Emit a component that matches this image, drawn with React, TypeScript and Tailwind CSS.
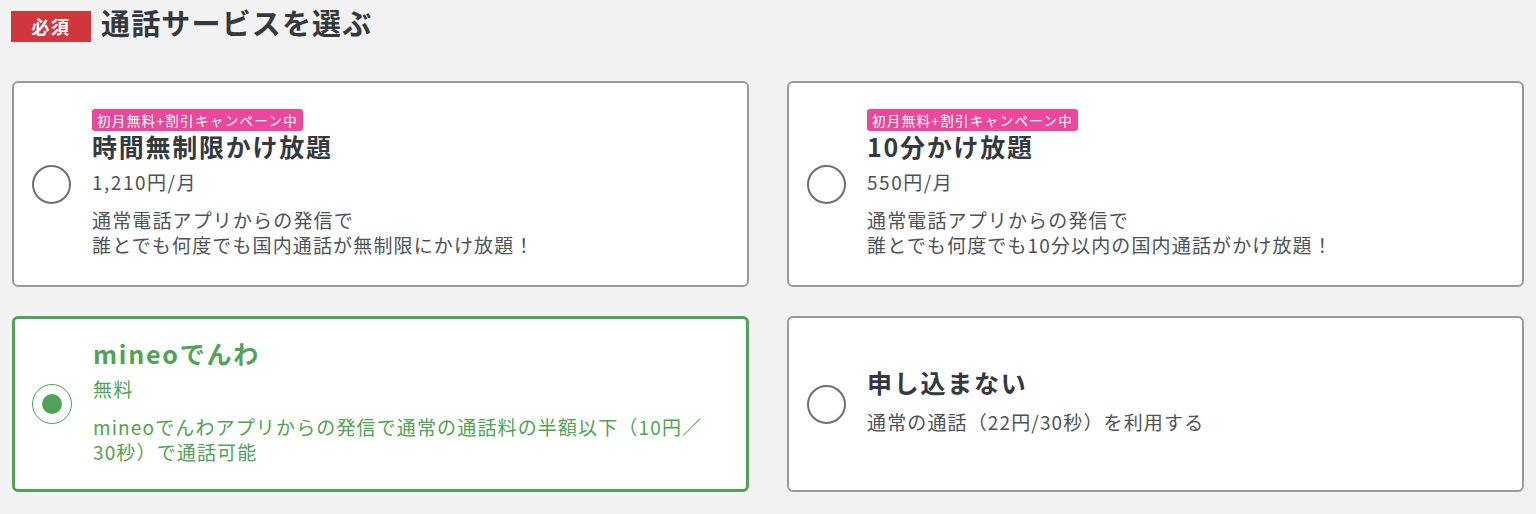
import React from "react";

const FONT = '"Noto Sans CJK JP", "Noto Sans", sans-serif';

type Opt = {
  promo?: boolean;
  title: string;
  price?: string;
  desc: React.ReactNode;
  selected?: boolean;
};

function Radio({ selected }: { selected?: boolean }) {
  if (selected) {
    return (
      <div className="flex h-[40px] w-[40px] shrink-0 items-center justify-center rounded-full border-[1.5px] border-[#4ea354] bg-white">
        <div className="h-[20px] w-[20px] rounded-full bg-[#4ea354]" />
      </div>
    );
  }
  return <div className="h-[39px] w-[39px] shrink-0 rounded-full border-2 border-[#6f6f6f] bg-white" />;
}

function Card({ opt, minH, lift }: { opt: Opt; minH: string; lift?: boolean }) {
  const sel = opt.selected;
  return (
    <div
      className={
        "flex items-center rounded-[6px] bg-white pr-[10px] " +
        minH +
        " " +
        (sel ? "border-[3px] border-[#4ea354] pl-[17px]" : "border-2 border-[#999999] pl-[18px]")
      }
    >
      <Radio selected={sel} />
      <div
        className={
          "ml-[21px] flex flex-col font-normal " +
          (lift ? "mb-[7px] " : "mb-[2px] ") +
          (sel ? "text-[#4ea354]" : "text-[#4d5256]")
        }
      >
        {opt.promo && (
          <div className="self-start rounded-[3px] bg-[#ea479d] px-[5px] text-[13.5px] font-normal leading-[22px] tracking-[0.1em] text-white">
            初月無料+割引キャンペーン中
          </div>
        )}
        <div
          className={
            "text-[25px] font-bold leading-[30px] tracking-[0.07em] " +
            (sel ? "text-[#4ea354]" : "text-[#33393e]")
          }
        >
          {opt.title}
        </div>
        {opt.price && <div className="mt-[8px] text-[19px] leading-[26px] tracking-[0.08em]">{opt.price}</div>}
        <div className={(opt.price ? "mt-[12px] " : "mt-[12px] ") + "whitespace-nowrap text-[19px] leading-[25px] tracking-[0.06em]"}>
          {opt.desc}
        </div>
      </div>
    </div>
  );
}

export default function App() {
  const opts: Opt[] = [
    {
      promo: true,
      title: "時間無制限かけ放題",
      price: "1,210円/月",
      desc: (
        <>
          通常電話アプリからの発信で
          <br />
          誰とでも何度でも国内通話が無制限にかけ放題！
        </>
      ),
    },
    {
      promo: true,
      title: "10分かけ放題",
      price: "550円/月",
      desc: (
        <>
          通常電話アプリからの発信で
          <br />
          誰とでも何度でも10分以内の国内通話がかけ放題！
        </>
      ),
    },
    {
      title: "mineoでんわ",
      price: "無料",
      selected: true,
      desc: (
        <>
          mineoでんわアプリからの発信で通常の通話料の半額以下（10円／
          <br />
          30秒）で通話可能
        </>
      ),
    },
    {
      title: "申し込まない",
      desc: <>通常の通話（22円/30秒）を利用する</>,
    },
  ];

  return (
    <div className="min-h-[514px] bg-[#f2f2f2] px-[12px] pt-[4px]" style={{ fontFamily: FONT }}>
      <div className="flex items-start">
        <div className="ml-[-1px] mt-[7px] flex h-[31px] w-[80px] items-center justify-center bg-[#d1363d] text-[18px] font-bold tracking-[0.08em] text-white">
          必須
        </div>
        <h2 className="ml-[10px] text-[29px] font-bold leading-[36px] tracking-[0.04em] text-[#33393e]">
          通話サービスを選ぶ
        </h2>
      </div>
      <div className="mt-[39px] grid grid-cols-2 gap-x-[38px] gap-y-[29px]">
        <Card opt={opts[0]} minH="min-h-[206px]" />
        <Card opt={opts[1]} minH="min-h-[206px]" />
        <Card opt={opts[2]} minH="min-h-[176px]" lift />
        <Card opt={opts[3]} minH="min-h-[176px]" lift />
      </div>
    </div>
  );
}
